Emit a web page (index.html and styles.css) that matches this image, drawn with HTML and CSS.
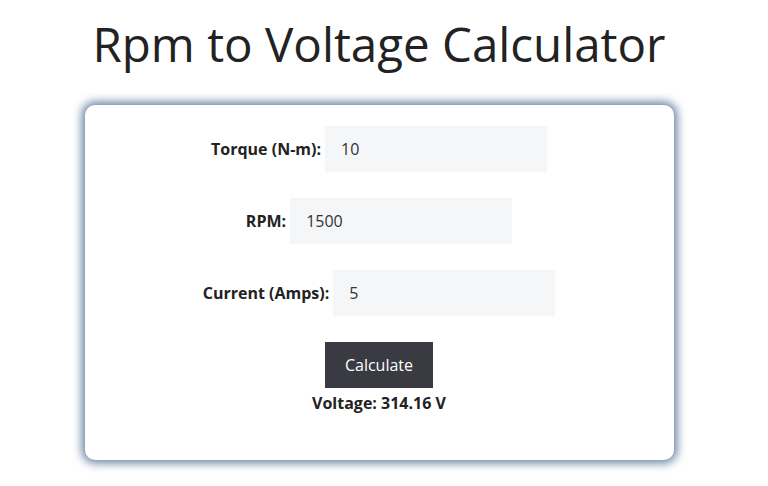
FILE: index.html
```html
<html>
<head>
	<title>Rpm to Voltage Calculator</title>
<link rel="stylesheet" href="styles.css">
</head>
<body>

<h1 class="title">Rpm to Voltage Calculator</h1>

<div class="card">
	<div class="row">
		<label for="torque">Torque (N-m):</label>
		<input type="number" id="torque" class="field" value="10">
	</div>
	<div class="row">
		<label for="rpm">RPM:</label>
		<input type="number" id="rpm" class="field" value="1500">
	</div>
	<div class="row">
		<label for="amps">Current (Amps):</label>
		<input type="number" id="amps" class="field" value="5">
	</div>
	<div class="actions">
		<button class="calc" onClick="calc();">Calculate</button>
		<p id="result" class="result">Voltage: 314.16 V</p>
	</div>
</div>

<script>
	function calc()
	{
		var t=parseFloat(document.getElementById("torque").value);
		var n=parseFloat(document.getElementById("rpm").value);
		var i=parseFloat(document.getElementById("amps").value);
		var v=(t*n*2*Math.PI/60)/i;
		document.getElementById("result").innerHTML='Voltage: '+v.toFixed(2)+' V';
	}
</script>

</body>
</html>
```

FILE: styles.css
```css
body{
	margin: 0 10px 0 0;
	background-color: #fff;
	color: #222;
	font-family: "Open Sans", "Noto Sans", sans-serif;
}

.title{
	font-weight: normal;
	font-size: 47.5px;
	text-align: center;
	margin: 15px 0 33px 0;
	line-height: 1.2;
	color: #222;
}

.card{
	width: 589px;
	box-sizing: border-box;
	margin: 0 auto;
	padding: 21px 20px 46px 20px;
	background-color: #fff;
	border-radius: 10px;
	box-shadow: 0 0 10px 3px rgba(50,85,130,0.75);
}

.row{
	display: flex;
	justify-content: center;
	align-items: center;
	gap: 4px;
	margin-bottom: 26px;
}

.row label{
	font-weight: bold;
	font-size: 16px;
	color: #222;
}

.field{
	width: 222px;
	height: 46px;
	box-sizing: border-box;
	border: none;
	padding: 0 16px;
	background-color: #f5f6f8;
	font-family: "Open Sans", "Noto Sans", sans-serif;
	font-size: 16px;
	color: #333;
	-moz-appearance: textfield;
}

.field::-webkit-inner-spin-button,
.field::-webkit-outer-spin-button{
	-webkit-appearance: none;
	margin: 0;
}

.actions{
	text-align: center;
}

.calc{
	width: 108px;
	height: 46px;
	border: none;
	background-color: #3a3a42;
	color: #fff;
	font-family: "Open Sans", "Noto Sans", sans-serif;
	font-size: 16px;
	cursor: pointer;
}

.result{
	margin: 4px 0 0 0;
	font-weight: bold;
	font-size: 16px;
	color: #222;
}
```
